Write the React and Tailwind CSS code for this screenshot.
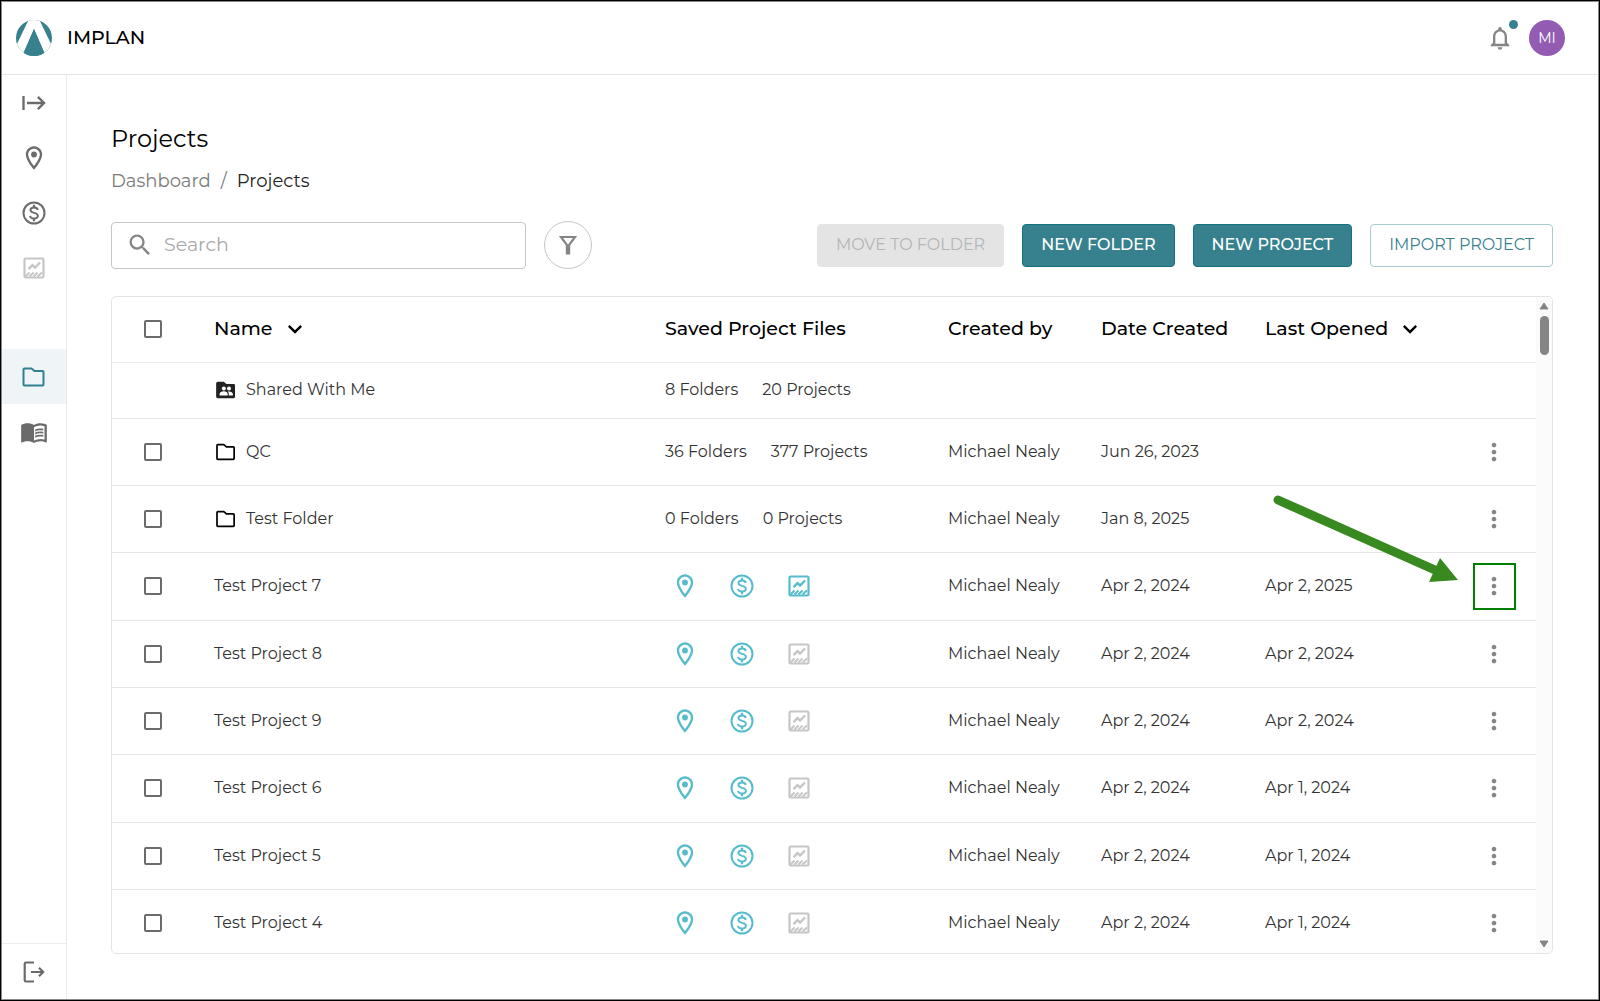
import { MdKeyboardArrowDown, MdMenuBook, MdMoreVert, MdNotificationsNone, MdOutlineLocationOn, MdSearch, MdStart } from 'react-icons/md';
import { clsx } from 'clsx';

const FOLDERS = [
    { name: 'QC', folders: 36, projects: 377, by: 'Michael Nealy', created: 'Jun 26, 2023' },
    { name: 'Test Folder', folders: 0, projects: 0, by: 'Michael Nealy', created: 'Jan 8, 2025' },
];

const PROJECTS = [
    { name: 'Test Project 7', by: 'Michael Nealy', created: 'Apr 2, 2024', opened: 'Apr 2, 2025', results: true, highlighted: true },
    { name: 'Test Project 8', by: 'Michael Nealy', created: 'Apr 2, 2024', opened: 'Apr 2, 2024' },
    { name: 'Test Project 9', by: 'Michael Nealy', created: 'Apr 2, 2024', opened: 'Apr 2, 2024' },
    { name: 'Test Project 6', by: 'Michael Nealy', created: 'Apr 2, 2024', opened: 'Apr 1, 2024' },
    { name: 'Test Project 5', by: 'Michael Nealy', created: 'Apr 2, 2024', opened: 'Apr 1, 2024' },
    { name: 'Test Project 4', by: 'Michael Nealy', created: 'Apr 2, 2024', opened: 'Apr 1, 2024' },
];

function Logo() {
    return (
        <svg viewBox="0 0 36 36" className="size-9" aria-hidden="true">
            <clipPath id="disc"><circle cx="18" cy="18" r="18" /></clipPath>
            <g clipPath="url(#disc)">
                <rect width="36" height="36" fill="#37818e" />
                <path d="M13 -1H23L37 28L30 36L18 9L6 36L-1 28Z" fill="#fff" />
                <path d="M18 9L29 36H7Z" fill="#37818e" />
            </g>
        </svg>
    );
}

function DollarIcon({ className }) {
    return (
        <svg viewBox="0 0 28 28" fill="none" stroke="currentColor" className={className} aria-hidden="true">
            <circle cx="14" cy="14" r="10.5" strokeWidth="2" />
            <path d="M17.8 11C17.5 9.3 16.2 8.5 14 8.5C11.8 8.5 10.4 9.5 10.4 11.1C10.4 12.8 11.8 13.4 14 13.9C16.5 14.4 17.9 15.2 17.9 16.8C17.9 18.5 16.3 19.5 14 19.5C11.7 19.5 10.3 18.5 10 16.8" strokeWidth="1.9" />
            <path d="M14 5.8V9M14 19V22.2" strokeWidth="2.2" />
        </svg>
    );
}

function ChartIcon({ className }) {
    return (
        <svg viewBox="0 0 28 28" fill="none" stroke="currentColor" className={className} aria-hidden="true">
            <rect x="4.5" y="4.5" width="19" height="19" rx="1.2" strokeWidth="2.2" />
            <path d="M8.5 15.2L12.5 11.2L15 13.5L20 8.5" strokeWidth="2.4" />
            <path d="M5.5 22.5L9.5 18.5M9.5 22.5L13.5 18.5M13.5 22.5L17.5 18.5M17.5 22.5L22 18.5" strokeWidth="1.9" />
        </svg>
    );
}

function FolderIcon({ className }) {
    return (
        <svg viewBox="0 0 28 28" fill="none" stroke="currentColor" strokeWidth="2" strokeLinejoin="round" className={className} aria-hidden="true">
            <path d="M4.5 5.5H11.5L14.5 8H22.5Q23.5 8 23.5 9V21.5Q23.5 22.5 22.5 22.5H4.5Q3.5 22.5 3.5 21.5V6.5Q3.5 5.5 4.5 5.5Z" />
        </svg>
    );
}

function SharedFolderIcon({ className }) {
    return (
        <svg viewBox="0 0 28 28" fill="currentColor" className={className} aria-hidden="true">
            <path d="M4.5 4.5H11.5L14.5 7H23Q24.5 7 24.5 8.5V22Q24.5 23.5 23 23.5H4.5Q2.5 23.5 2.5 22V6.5Q2.5 4.5 4.5 4.5Z" />
            <g fill="#fff">
                <circle cx="11.5" cy="12.3" r="2.3" />
                <circle cx="17.5" cy="12.3" r="2.3" />
                <path d="M6.5 20.5V18.8Q7 15.8 11.5 15.6Q15.5 15.8 16 18.8V20.5ZM17.3 20.5V18.6Q17.2 17 16 15.8Q21.5 15.2 22 18.8V20.5Z" />
            </g>
        </svg>
    );
}

function LogoutIcon({ className }) {
    return (
        <svg viewBox="0 0 28 28" fill="none" stroke="currentColor" strokeWidth="2.2" className={className} aria-hidden="true">
            <path d="M14 4.5H6Q4.7 4.5 4.7 5.8V22.2Q4.7 23.5 6 23.5H14" />
            <path d="M11 14H23M19 9.8L23.2 14L19 18.2" />
        </svg>
    );
}

function FunnelIcon({ className }) {
    return (
        <svg viewBox="0 0 24 24" fill="none" stroke="currentColor" strokeWidth="2.2" className={className} aria-hidden="true">
            <path d="M5 4H19L12.8 12.5H11.2Z" />
            <path d="M12 12V21.5" strokeWidth="4.4" />
        </svg>
    );
}

function NavLink({ label, active, muted, children }) {
    return (
        <a
            href="#"
            aria-label={label}
            className={clsx('flex h-[55px] items-center justify-center', active ? 'bg-[#eff5f7] text-[#2f8090]' : muted ? 'text-[#c6c6c6]' : 'text-[#6b6b6b]')}
        >
            {children}
        </a>
    );
}

function CheckBox({ label }) {
    return <input type="checkbox" aria-label={label} className="block size-[18px] appearance-none rounded-[2px] border-2 border-[#6b6b6b]" />;
}

function Arrow() {
    return (
        <svg viewBox="0 0 188 92" className="pointer-events-none absolute -top-[72px] right-full mr-4 h-[92px] w-[188px] max-w-none" aria-hidden="true">
            <path d="M7 7L164 77" stroke="#38891f" strokeWidth="9" strokeLinecap="round" />
            <path d="M187 87L169 65L158 89Z" fill="#38891f" />
        </svg>
    );
}

function RowMenu({ name, highlighted }) {
    return (
        <button
            type="button"
            aria-label={`Actions for ${name}`}
            className={clsx('relative mx-auto flex h-[47px] w-[43px] items-center justify-center border-2 text-[#858585]', highlighted ? 'border-[#008000]' : 'border-transparent')}
        >
            <MdMoreVert className="size-7 shrink-0" />
            {highlighted && <Arrow />}
        </button>
    );
}

function SavedCounts({ folders, projects }) {
    return (
        <div className="flex gap-6">
            <span>{folders} Folders</span>
            <span>{projects} Projects</span>
        </div>
    );
}

function ProjectsTable() {
    return (
        <table className="w-full table-fixed text-left whitespace-nowrap">
            <colgroup>
                <col className="w-[82px]" />
                <col />
                <col className="w-[283px]" />
                <col className="w-[153px]" />
                <col className="w-[164px]" />
                <col className="w-[207px]" />
                <col className="w-[84px]" />
            </colgroup>
            <thead>
                <tr className="h-[65px] border-b border-[#ececec] text-[19px] text-black [&>th]:px-5 [&>th]:py-0 [&>th]:font-medium">
                    <th><div className="pl-3"><CheckBox label="Select all" /></div></th>
                    <th>
                        <button type="button" className="flex items-center gap-2">Name <MdKeyboardArrowDown className="size-7" /></button>
                    </th>
                    <th>Saved Project Files</th>
                    <th>Created by</th>
                    <th>Date Created</th>
                    <th>
                        <button type="button" className="flex items-center gap-2">Last Opened <MdKeyboardArrowDown className="size-7" /></button>
                    </th>
                    <th aria-label="Actions" />
                </tr>
            </thead>
            <tbody className="text-base text-[#333] [&_td]:px-5 [&_td]:py-0">
                <tr className="h-[56px] border-b border-[#e6e6e6]">
                    <td />
                    <td>
                        <a href="#" className="flex items-center gap-2"><SharedFolderIcon className="size-6 text-[#222]" />Shared With Me</a>
                    </td>
                    <td><SavedCounts folders={8} projects={20} /></td>
                    <td /><td /><td /><td />
                </tr>
                {FOLDERS.map((f) => (
                    <tr key={f.name} className="h-[67px] border-b border-[#e6e6e6]">
                        <td><div className="pl-3"><CheckBox label={`Select ${f.name}`} /></div></td>
                        <td>
                            <a href="#" className="flex items-center gap-2"><FolderIcon className="size-6 text-black" />{f.name}</a>
                        </td>
                        <td><SavedCounts folders={f.folders} projects={f.projects} /></td>
                        <td>{f.by}</td>
                        <td>{f.created}</td>
                        <td />
                        <td><RowMenu name={f.name} /></td>
                    </tr>
                ))}
                {PROJECTS.map((p) => (
                    <tr key={p.name} className="h-[67px] border-b border-[#e6e6e6] nth-[3n+1]:h-[68px]">
                        <td><div className="pl-3"><CheckBox label={`Select ${p.name}`} /></div></td>
                        <td><a href="#">{p.name}</a></td>
                        <td>
                            <div className="flex gap-[29px] pl-[6px] text-[#56bccb]">
                                <MdOutlineLocationOn className="size-7" />
                                <DollarIcon className="size-7" />
                                <ChartIcon className={clsx('size-7', !p.results && 'text-[#c6c6c6]')} />
                            </div>
                        </td>
                        <td>{p.by}</td>
                        <td>{p.created}</td>
                        <td>{p.opened}</td>
                        <td><RowMenu name={p.name} highlighted={p.highlighted} /></td>
                    </tr>
                ))}
            </tbody>
        </table>
    );
}

function ScrollTrack() {
    return (
        <div className="flex w-4 shrink-0 flex-col items-center bg-[#fbfbfb] py-[5px] text-[#858585]">
            <svg viewBox="0 0 10 8" className="h-2 w-[10px]" aria-hidden="true"><path d="M5 1L9 7H1Z" fill="currentColor" stroke="currentColor" strokeLinejoin="round" /></svg>
            <div className="mt-[6px] h-[39px] w-[9px] rounded-full bg-[#858585]" />
            <svg viewBox="0 0 10 8" className="mt-auto h-2 w-[10px]" aria-hidden="true"><path d="M5 7L9 1H1Z" fill="currentColor" stroke="currentColor" strokeLinejoin="round" /></svg>
        </div>
    );
}

export default function App() {
    return (
        <div className="h-screen border border-black bg-white font-['Montserrat','Inter',sans-serif] text-black">
            <div className="flex h-full flex-col border border-[#8a8a8a]">
                <header className="flex h-[73px] shrink-0 items-center border-b border-[#e4e4e4] pr-[33px] pl-[14px]">
                    <Logo />
                    <span className="ml-[15px] text-[19px] font-medium">IMPLAN</span>
                    <button type="button" aria-label="Notifications" className="relative ml-auto text-[#858585]">
                        <MdNotificationsNone className="size-7" />
                        <span className="absolute -top-1 -right-1 size-[9px] rounded-full bg-[#37818e]" />
                    </button>
                    <button type="button" className="ml-[15px] size-9 rounded-full bg-[#935bb2] text-sm text-white">MI</button>
                </header>

                <div className="flex min-h-0 flex-1">
                    <nav className="flex w-[65px] shrink-0 flex-col border-r border-[#ececec]">
                        <NavLink label="Expand menu"><MdStart className="size-7" /></NavLink>
                        <NavLink label="Regions"><MdOutlineLocationOn className="size-7" /></NavLink>
                        <NavLink label="Impacts"><DollarIcon className="size-7" /></NavLink>
                        <NavLink label="Results" muted><ChartIcon className="size-7" /></NavLink>
                        <div className="mt-[54px]">
                            <NavLink label="Projects" active><FolderIcon className="size-7" /></NavLink>
                            <NavLink label="Resources"><MdMenuBook className="size-7" /></NavLink>
                        </div>
                        <div className="mt-auto border-t border-[#ececec]">
                            <NavLink label="Log out"><LogoutIcon className="size-7" /></NavLink>
                        </div>
                    </nav>

                    <main className="flex min-w-0 flex-1 flex-col pt-12 pr-[45px] pb-[45px] pl-[44px]">
                        <h1 className="text-2xl leading-8">Projects</h1>
                        <div className="mt-3 flex gap-[10px] text-lg leading-7">
                            <a href="#" className="text-[#7a7a7a]">Dashboard</a>
                            <span className="text-[#7a7a7a]">/</span>
                            <span className="text-[#222]">Projects</span>
                        </div>

                        <div className="mt-[26px] flex items-center">
                            <label className="flex h-[47px] w-[415px] items-center gap-[10px] rounded-[4px] border border-[#c6c6c6] pl-[14px]">
                                <MdSearch className="size-7 text-[#858585]" />
                                <input type="search" aria-label="Search" placeholder="Search" className="min-w-0 flex-1 text-[19px] outline-none placeholder:text-[#aaa]" />
                            </label>
                            <button type="button" aria-label="Filter" className="ml-[18px] flex size-12 items-center justify-center rounded-full border border-[#c6c6c6] text-[#858585]">
                                <FunnelIcon className="size-6" />
                            </button>
                            <div className="ml-auto flex gap-[18px] text-base [&>button]:h-[43px] [&>button]:rounded-[4px] [&>button]:border [&>button]:px-[18px]">
                                <button type="button" disabled className="border-[#e4e4e4] bg-[#e4e4e4] text-[#b5b5b5]">MOVE TO FOLDER</button>
                                <button type="button" className="border-[#12717f] bg-[#37818e] font-medium text-white">NEW FOLDER</button>
                                <button type="button" className="border-[#12717f] bg-[#37818e] font-medium text-white">NEW PROJECT</button>
                                <button type="button" className="border-[#a9ccd2] text-[#37818e]">IMPORT PROJECT</button>
                            </div>
                        </div>

                        <div className="mt-[27px] flex min-h-0 flex-1 overflow-hidden rounded-[5px] border border-[#e4e4e4]">
                            <div className="min-w-0 flex-1 overflow-hidden"><ProjectsTable /></div>
                            <ScrollTrack />
                        </div>
                    </main>
                </div>
            </div>
        </div>
    );
}
